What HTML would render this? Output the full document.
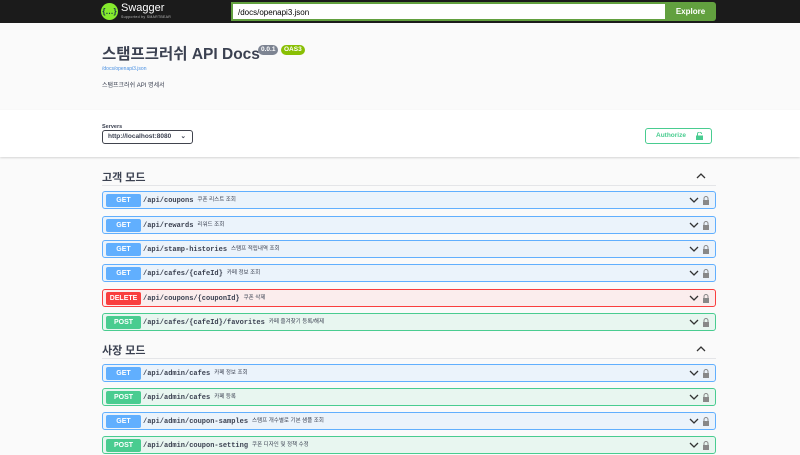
<!DOCTYPE html>
<html><head><meta charset="utf-8"><style>
*{margin:0;padding:0;box-sizing:border-box}
body{width:800px;height:455px;overflow:hidden;background:#fafafa;font-family:"Liberation Sans","Noto Sans CJK KR",sans-serif;color:#3b4151;position:relative}
.top{position:absolute;left:0;top:0;width:800px;height:23px;background:#1b1b1b}
.logo{position:absolute;left:101px;top:3px;width:17px;height:17px;border-radius:50%;background:#85ea2d;color:#173647;font-size:8px;font-weight:bold;text-align:center;line-height:17px}
.sw{position:absolute;left:121px;top:2px;color:#fff;font-size:11px}
.sb{position:absolute;left:121px;top:15px;color:#bbb;font-size:3.5px;letter-spacing:.3px}
.inp{position:absolute;left:231px;top:2px;width:435px;height:19px;background:#fff;border:2px solid #62a03f;border-right:none;font-size:8px;padding:4px 0 0 5px;color:#000}
.exp{position:absolute;left:665px;top:2px;width:51px;height:19px;background:#62a03f;color:#fff;font-size:8px;font-weight:bold;text-align:center;line-height:19px;border-radius:0 3px 3px 0}
.info{position:absolute;left:0;top:23px;width:800px;height:87px;background:#fafafa}
h1{position:absolute;left:102px;top:42px;font-size:15.5px;font-weight:bold;color:#3b4151}
.v{position:absolute;top:45px;height:10px;border-radius:5px;color:#fff;font-size:6.5px;font-weight:bold;line-height:10px;padding:0 3px}
.scheme{position:absolute;left:0;top:110px;width:800px;height:47px;background:#fff;box-shadow:0 1px 2px rgba(0,0,0,.15)}
.sel{position:absolute;left:102px;top:130px;width:91px;height:14px;border:1.5px solid #41444e;border-radius:3px;font-size:6.5px;font-weight:bold;padding:2px 0 0 5px;background:#fff}
.auth{position:absolute;left:645px;top:128px;width:67px;height:16px;border:1.5px solid #49cc90;border-radius:3px;color:#49cc90;font-size:6.5px;font-weight:bold;padding:3px 0 0 10px}
.tag{position:absolute;left:102px;width:614px;height:17px;border-bottom:1px solid #e4e5e8;font-size:11px;font-weight:bold}
.op{position:absolute;left:102px;width:614px;height:18px;border:1px solid;border-radius:3px}
.m{position:absolute;left:3px;top:2px;width:35px;height:13px;border-radius:2px;color:#fff;font-size:7px;font-weight:bold;text-align:center;line-height:13px}
.p{position:absolute;left:40px;top:3.5px;font-family:"Liberation Mono","DejaVu Sans Mono",monospace;font-size:7px;font-weight:bold;color:#3b4151}
.d{font-family:"Liberation Sans","Noto Sans CJK KR",sans-serif;font-weight:normal;font-size:5.5px;margin-left:4px;position:relative;top:-0.5px}
.ic{position:absolute;right:4px;top:4px}
.get{background:#ebf3fb;border-color:#61affe}.get .m{background:#61affe}
.post{background:#e8f6f0;border-color:#49cc90}.post .m{background:#49cc90}
.del{background:#fbeded;border-color:#f93e3e}.del .m{background:#f93e3e}
</style></head><body>
<div class="top"><div class="logo">{…}</div><div class="sw">Swagger</div><div class="sb">Supported by SMARTBEAR</div>
<div class="inp">/docs/openapi3.json</div><div class="exp">Explore</div></div>
<div class="info"></div>
<h1>스탬프크러쉬 API Docs</h1>
<div class="v" style="left:258px;background:#7d8492">0.0.1</div>
<div class="v" style="left:281px;background:#89bf04">OAS3</div>
<div style="position:absolute;left:102px;top:66px;font-size:5px;color:#4990e2">/docs/openapi3.json</div>
<div style="position:absolute;left:102px;top:80px;font-size:6px">스탬프크러쉬 API 명세서</div>
<div class="scheme"></div>
<div style="position:absolute;left:102px;top:124px;font-size:5.5px;font-weight:bold">Servers</div>
<div class="sel">http://localhost:8080<span style="position:absolute;right:6px;top:1px">⌄</span></div>
<div class="auth">Authorize <svg style="position:absolute;right:8px;top:3px" width="7" height="8" viewBox="0 0 7 8"><path d="M1.5 3.5V2a2 2 0 0 1 4 0" fill="none" stroke="#49cc90"/><rect x="0" y="3.5" width="7" height="4.5" fill="#49cc90"/></svg></div>

<div class="tag" style="top:169px">고객 모드</div>
<svg style="position:absolute;left:696px;top:172px" width="10" height="7"><path d="M1 6l4-4 4 4" fill="none" stroke="#333" stroke-width="1.3"/></svg>
<div class="tag" style="top:342px">사장 모드</div>
<svg style="position:absolute;left:696px;top:345px" width="10" height="7"><path d="M1 6l4-4 4 4" fill="none" stroke="#333" stroke-width="1.3"/></svg>

<div id="ops"></div>
<script>
var ops=[[191,'get','GET','/api/coupons','쿠폰 리스트 조회'],[216,'get','GET','/api/rewards','리워드 조회'],[240,'get','GET','/api/stamp-histories','스탬프 적립내역 조회'],[264,'get','GET','/api/cafes/{cafeId}','카페 정보 조회'],[289,'del','DELETE','/api/coupons/{couponId}','쿠폰 삭제'],[313,'post','POST','/api/cafes/{cafeId}/favorites','카페 즐겨찾기 등록/해제'],[364,'get','GET','/api/admin/cafes','카페 정보 조회'],[388,'post','POST','/api/admin/cafes','카페 등록'],[412,'get','GET','/api/admin/coupon-samples','스탬프 개수별로 기본 샘플 조회'],[436,'post','POST','/api/admin/coupon-setting','쿠폰 디자인 및 정책 수정']];
var h='';ops.forEach(function(o){h+='<div class="op '+o[1]+'" style="top:'+o[0]+'px"><div class="m">'+o[2]+'</div><div class="p">'+o[3]+'<span class="d">'+o[4]+'</span></div><svg class="ic" width="22" height="9" viewBox="0 0 22 9"><path d="M1 2l4 4 4-4" fill="none" stroke="#333" stroke-width="1.3"/><path d="M15 4V2.5a2 2 0 0 1 4 0V4" fill="none" stroke="#888"/><rect x="14" y="4" width="6" height="5" fill="#888"/></svg></div>'});
document.getElementById('ops').innerHTML=h;
</script>
</body></html>
